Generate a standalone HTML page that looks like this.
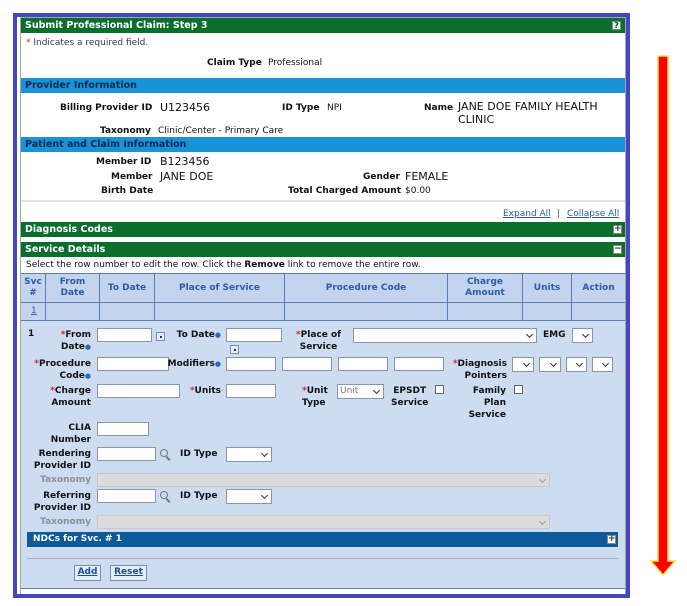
<!DOCTYPE html>
<html><head><meta charset="utf-8"><style>
*{margin:0;padding:0;box-sizing:border-box}
body{width:687px;height:606px;background:#fff;position:relative;overflow:hidden;font-family:"DejaVu Sans","Liberation Sans",sans-serif;font-size:9px;color:#111}
.a{position:absolute;white-space:nowrap}
.b{font-weight:bold}
.bar{position:absolute;left:21px;width:604px;height:15px;color:#fff;font-weight:bold;font-size:9.5px;padding:2px 4px;line-height:11px}
.g{background:#0b6e2c}
.bl{background:#1a92d8;color:#0a2a50}
.in{position:absolute;background:#fff;border:1px solid #8a96a8;height:14px}
.sel{position:absolute;background:#fff;border:1px solid #8a96a8;height:15px}
.sel:after{content:"";position:absolute;right:4px;top:3px;width:4px;height:4px;border-right:1.3px solid #333;border-bottom:1.3px solid #333;transform:rotate(45deg)}
.dis{background:#dcdcdc;border-color:#c8c8c8}
.dis:after{border-color:#999}
.st{color:#e02020}
.pm{position:absolute;width:9px;height:9px;background:#fff;border:1px solid #888;color:#333;font-size:9px;line-height:6px;text-align:center;font-weight:bold}
.th{position:absolute;top:274px;height:28px;border-right:1px solid #5a7db8;color:#2a5ca8;font-weight:bold;text-align:center;font-size:9px;line-height:11px;display:flex;align-items:center;justify-content:center}
.lb{position:absolute;font-weight:bold;text-align:right;line-height:12px;white-space:nowrap}
.i{color:#2a6ab8;font-size:7px}
.cb{position:absolute;width:9px;height:9px;border:1px solid #666;background:#fff}
.cal{position:absolute;width:9px;height:9px;border:1px solid #7a8fb0;background:#e8eef8}
.cal:after{content:"";position:absolute;left:3px;top:3px;width:2px;height:2px;background:#335}
.mag{position:absolute;width:8px;height:8px;border:1.5px solid #777;border-radius:50%}
.mag:after{content:"";position:absolute;left:6px;top:6px;width:5px;height:2px;background:#777;transform:rotate(45deg);transform-origin:0 0}
</style></head><body>
<div class="a" style="left:13px;top:13px;width:617px;height:585px;border:4px solid #4646c4"></div>
<div class="a" style="left:20px;top:17px;width:606px;height:577px;border:1px solid #9aa;background:#fff"></div>

<div class="bar g" style="top:18px">Submit Professional Claim: Step 3</div>
<div class="pm" style="left:612px;top:21px;line-height:8px;font-size:8px;background:#cfe;">?</div>
<div class="a" style="left:26px;top:38px;color:#336"><span class="st">*</span> Indicates a required field.</div>
<div class="a b" style="left:207px;top:58px">Claim Type</div>
<div class="a" style="left:268px;top:58px">Professional</div>

<div class="bar bl" style="top:78px">Provider Information</div>
<div class="a b" style="left:60px;top:103px">Billing Provider ID</div>
<div class="a" style="left:160px;top:101px;font-size:11px">U123456</div>
<div class="a b" style="left:282px;top:103px">ID Type</div>
<div class="a" style="left:327px;top:103px">NPI</div>
<div class="a b" style="left:424px;top:103px">Name</div>
<div class="a" style="left:458px;top:100px;font-size:11px;line-height:13px">JANE DOE FAMILY HEALTH<br>CLINIC</div>
<div class="a b" style="left:100px;top:126px">Taxonomy</div>
<div class="a" style="left:158px;top:126px">Clinic/Center - Primary Care</div>

<div class="bar bl" style="top:137px">Patient and Claim Information</div>
<div class="a b" style="left:96px;top:157px">Member ID</div>
<div class="a" style="left:160px;top:155px;font-size:11px">B123456</div>
<div class="a b" style="left:111px;top:172px">Member</div>
<div class="a" style="left:160px;top:170px;font-size:11px">JANE DOE</div>
<div class="a b" style="left:363px;top:172px">Gender</div>
<div class="a" style="left:405px;top:170px;font-size:11px">FEMALE</div>
<div class="a b" style="left:101px;top:186px">Birth Date</div>
<div class="a b" style="left:288px;top:186px">Total Charged Amount</div>
<div class="a" style="left:405px;top:186px">$0.00</div>
<div class="a" style="left:21px;top:200px;width:604px;height:2px;background:#e4e4e4"></div>

<div class="a" style="left:503px;top:209px;color:#2a5ca8;text-decoration:underline">Expand All</div>
<div class="a" style="left:557px;top:209px;color:#2a5ca8">|</div>
<div class="a" style="left:567px;top:209px;color:#2a5ca8;text-decoration:underline">Collapse All</div>

<div class="bar g" style="top:222px">Diagnosis Codes</div>
<div class="pm" style="left:613px;top:225px">+</div>
<div class="bar g" style="top:242px">Service Details</div>
<div class="pm" style="left:613px;top:245px">−</div>
<div class="a" style="left:26px;top:260px">Select the row number to edit the row. Click the <b>Remove</b> link to remove the entire row.</div>

<div class="a" style="left:21px;top:273px;width:604px;height:48px;background:#c4d4ee;border-top:1px solid #5a7db8;border-bottom:1px solid #5a7db8"></div>
<div class="a" style="left:21px;top:302px;width:604px;height:1px;background:#5a7db8"></div>
<div class="th" style="left:21px;width:25px">Svc<br>#</div>
<div class="th" style="left:46px;width:54px">From<br>Date</div>
<div class="th" style="left:100px;width:55px">To Date</div>
<div class="th" style="left:155px;width:130px">Place of Service</div>
<div class="th" style="left:285px;width:163px">Procedure Code</div>
<div class="th" style="left:448px;width:75px">Charge<br>Amount</div>
<div class="th" style="left:523px;width:49px">Units</div>
<div class="th" style="left:572px;width:53px;border-right:none">Action</div>
<div class="a" style="left:45px;top:303px;width:1px;height:18px;background:#5a7db8"></div>
<div class="a" style="left:99px;top:303px;width:1px;height:18px;background:#5a7db8"></div>
<div class="a" style="left:154px;top:303px;width:1px;height:18px;background:#5a7db8"></div>
<div class="a" style="left:284px;top:303px;width:1px;height:18px;background:#5a7db8"></div>
<div class="a" style="left:447px;top:303px;width:1px;height:18px;background:#5a7db8"></div>
<div class="a" style="left:522px;top:303px;width:1px;height:18px;background:#5a7db8"></div>
<div class="a" style="left:571px;top:303px;width:1px;height:18px;background:#5a7db8"></div>
<div class="a" style="left:31px;top:306px;color:#2a5ca8;text-decoration:underline">1</div>

<div class="a" style="left:21px;top:321px;width:604px;height:272px;background:#cddcf0"></div>

<div class="a b" style="left:28px;top:329px">1</div>
<div class="lb" style="left:40px;width:51px;top:329px"><span class="st">*</span>From<br>Date<span class="i">●</span></div>
<div class="in" style="left:97px;top:328px;width:55px"></div>
<div class="cal" style="left:156px;top:332px"></div>
<div class="lb" style="left:170px;width:51px;top:329px">To Date<span class="i">●</span></div>
<div class="in" style="left:226px;top:328px;width:56px"></div>
<div class="cal" style="left:230px;top:345px"></div>
<div class="lb" style="left:290px;width:57px;top:329px;text-align:center"><span class="st">*</span>Place of<br>Service</div>
<div class="sel" style="left:353px;top:328px;width:184px"></div>
<div class="lb" style="left:543px;top:329px">EMG</div>
<div class="sel" style="left:572px;top:328px;width:21px"></div>

<div class="lb" style="left:30px;width:61px;top:358px"><span class="st">*</span>Procedure<br>Code<span class="i">●</span></div>
<div class="in" style="left:97px;top:357px;width:72px"></div>
<div class="lb" style="left:166px;width:55px;top:358px">Modifiers<span class="i">●</span></div>
<div class="in" style="left:226px;top:357px;width:50px"></div>
<div class="in" style="left:282px;top:357px;width:50px"></div>
<div class="in" style="left:338px;top:357px;width:50px"></div>
<div class="in" style="left:394px;top:357px;width:50px"></div>
<div class="lb" style="left:448px;width:59px;top:358px"><span class="st">*</span>Diagnosis<br>Pointers</div>
<div class="sel" style="left:512px;top:357px;width:22px"></div>
<div class="sel" style="left:539px;top:357px;width:22px"></div>
<div class="sel" style="left:566px;top:357px;width:21px"></div>
<div class="sel" style="left:592px;top:357px;width:21px"></div>

<div class="lb" style="left:30px;width:61px;top:385px"><span class="st">*</span>Charge<br>Amount</div>
<div class="in" style="left:97px;top:384px;width:83px"></div>
<div class="lb" style="left:180px;width:41px;top:385px"><span class="st">*</span>Units</div>
<div class="in" style="left:226px;top:384px;width:50px"></div>
<div class="lb" style="left:302px;width:32px;top:385px;text-align:left"><span class="st">*</span>Unit<br>Type</div>
<div class="sel" style="left:337px;top:384px;width:47px;color:#777;padding-left:2px;line-height:12px">Unit</div>
<div class="lb" style="left:391px;top:385px;text-align:center">EPSDT<br>Service</div>
<div class="cb" style="left:435px;top:385px"></div>
<div class="lb" style="left:466px;width:40px;top:385px">Family<br>Plan<br>Service</div>
<div class="cb" style="left:514px;top:385px"></div>

<div class="lb" style="left:30px;width:61px;top:422px">CLIA<br>Number</div>
<div class="in" style="left:97px;top:422px;width:52px"></div>

<div class="lb" style="left:20px;width:71px;top:448px">Rendering<br>Provider ID</div>
<div class="in" style="left:97px;top:447px;width:59px"></div>
<div class="mag" style="left:160px;top:449px"></div>
<div class="lb" style="left:180px;top:448px">ID Type</div>
<div class="sel" style="left:226px;top:447px;width:46px"></div>
<div class="lb" style="left:30px;width:61px;top:474px;color:#8a8f98">Taxonomy</div>
<div class="sel dis" style="left:97px;top:473px;width:453px;height:14px"></div>

<div class="lb" style="left:20px;width:71px;top:490px">Referring<br>Provider ID</div>
<div class="in" style="left:97px;top:489px;width:59px"></div>
<div class="mag" style="left:160px;top:491px"></div>
<div class="lb" style="left:180px;top:490px">ID Type</div>
<div class="sel" style="left:226px;top:489px;width:46px"></div>
<div class="lb" style="left:30px;width:61px;top:516px;color:#8a8f98">Taxonomy</div>
<div class="sel dis" style="left:97px;top:515px;width:453px;height:14px"></div>

<div class="a" style="left:27px;top:532px;width:591px;height:15px;background:#0c5a9a;color:#fff;font-weight:bold;padding:2px 6px;line-height:11px">NDCs for Svc. # 1</div>
<div class="pm" style="left:607px;top:535px">+</div>
<div class="a" style="left:27px;top:558px;width:591px;height:1px;background:#a8b0bc"></div>
<div class="a" style="left:74px;top:565px;width:27px;height:16px;border:1px solid #7a8ea8;background:#e6eef8;color:#1a4fa0;font-weight:bold;text-decoration:underline;text-align:center;line-height:13px">Add</div>
<div class="a" style="left:110px;top:565px;width:37px;height:16px;border:1px solid #7a8ea8;background:#e6eef8;color:#1a4fa0;font-weight:bold;text-decoration:underline;text-align:center;line-height:13px">Reset</div>
<div class="a" style="left:21px;top:588px;width:604px;height:1px;background:#6a80a0"></div>
<div class="a" style="left:21px;top:589px;width:604px;height:5px;background:#fff"></div>

<svg class="a" style="left:648px;top:53px" width="30" height="526"><polygon points="10,3 20,3 20,508 27,508 15,522 3,508 10,508" fill="#ff0000" stroke="#ffe04a" stroke-width="1.5"/></svg>
</body></html>
